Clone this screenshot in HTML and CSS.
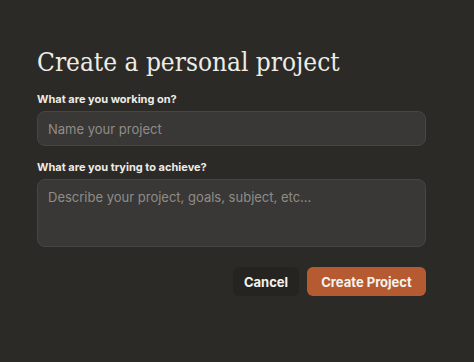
FILE: index.html
```html
<!DOCTYPE html>
<html lang="en">

<head>
    <meta charset="UTF-8">
    <meta name="viewport" content="width=device-width, initial-scale=1.0">
    <title>Create a personal project</title>

    <link rel="stylesheet" href="styles.css">
</head>

<body>
    <div class="projectHolder">
        <h1>Create a personal project</h1>

        <label class="fieldLabel" for="projectName">What are you working on?</label>
        <input id="projectName" class="nameInput" placeholder="Name your project">

        <label class="fieldLabel" for="projectGoal">What are you trying to achieve?</label>
        <textarea id="projectGoal" class="goalInput" placeholder="Describe your project, goals, subject, etc..."></textarea>

        <div class="projectAction">
            <button id="cancel">Cancel</button>
            <button id="create">Create Project</button>
        </div>
    </div>
</body>

</html>
```

FILE: styles.css
```css
body {
    font-family: 'Inter', sans-serif;
    background-color: #2b2a27;
    margin: 0;
    padding: 0;
}

.projectHolder {
    padding: 44px 48px 0 37px;
    display: flex;
    flex-direction: column;
}

h1 {
    font-family: 'DejaVu Serif Condensed', 'DejaVu Serif', serif;
    font-stretch: condensed;
    font-weight: normal;
    font-size: 26px;
    color: #eeece6;
    margin: 0 0 12px 0;
    line-height: 36px;
}

.fieldLabel {
    font-size: 11px;
    font-weight: 700;
    color: #eeece6;
    line-height: 14px;
    margin-bottom: 5px;
}

.nameInput,
.goalInput {
    width: 100%;
    background-color: #393836;
    border: 1px solid #474643;
    border-radius: 8px;
    color: #eeece6;
    font-family: 'Inter', sans-serif;
    font-size: 13px;
    padding: 0 10px;
    box-sizing: border-box;
    outline: none;
}

.nameInput {
    height: 35px;
    margin-bottom: 14px;
}

.goalInput {
    height: 68px;
    padding-top: 9px;
    resize: none;
}

::placeholder {
    color: #8f8d87;
}

.projectAction {
    display: flex;
    justify-content: flex-end;
    gap: 8px;
    margin-top: 20px;
}

#cancel,
#create {
    height: 29px;
    border: none;
    border-radius: 6px;
    color: #f5f3ee;
    font-family: 'Inter', sans-serif;
    font-size: 13px;
    font-weight: 700;
    cursor: pointer;
}

#cancel {
    width: 66px;
    background-color: #252421;
}

#create {
    width: 119px;
    background-color: #b65a31;
}
```
